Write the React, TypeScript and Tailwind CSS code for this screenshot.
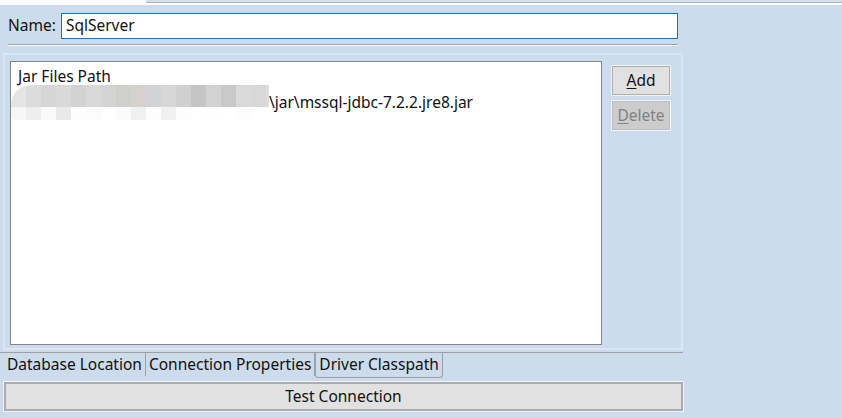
import React from "react";

const blurTop = ["#e4e4e4", "#dcdcdc", "#d6d6d6", "#d9d9d9", "#d2d2d2", "#d8d8d8", "#d4d4d4", "#cfd0cc", "#d6d1cf", "#d2d3d6", "#d7d7d7", "#d0d0d0", "#c6c5c5", "#d2d2d2", "#c9c9c9", "#dadada", "#d8d8d8", "#dddddd"];
const blurBottom = ["#f6f6f6", "#eeeeee", "#fafafa", "#e9e9e9", "#fdfdfd", "#fcfcfc", "#ffffff", "#fbfbfb", "#f0f0f0", "#fdfdfd", "#f1f1f1", "#fdfdfd", "#ffffff", "#fefefe", "#ffffff", "#fdfdfd", "#ffffff", "#ffffff"];

function Blur() {
  return (
    <div className="flex h-[35px] w-[258px] flex-col overflow-hidden rounded-tl-[20px] rounded-bl-[6px]">
      <div className="flex h-[22px]">
        {blurTop.map((c, i) => (
          <div key={i} className="h-full w-[15px] shrink-0" style={{ background: c }} />
        ))}
      </div>
      <div className="flex h-[13px]">
        {blurBottom.map((c, i) => (
          <div key={i} className="h-full w-[15px] shrink-0" style={{ background: c }} />
        ))}
      </div>
    </div>
  );
}

function Tab({ label, selected }: { label: string; selected?: boolean }) {
  if (selected) {
    return (
      <div className="flex h-[25px] items-center rounded-b-[3px] border-x border-b border-[#a0a0a0] bg-[#cddcec] px-[3px]">
        {label}
      </div>
    );
  }
  return <div className="flex h-[23px] items-center border-r border-[#a0a0a0] px-[3px]">{label}</div>;
}

export default function App() {
  return (
    <div
      className="flex h-[418px] w-[842px] flex-col overflow-hidden bg-[#cddcec] text-[15.5px] text-[#111]"
      style={{ fontFamily: '"Noto Sans", "Open Sans", sans-serif' }}
    >
      <div className="flex h-[5px] shrink-0">
        <div className="w-[146px] bg-white" />
        <div className="flex flex-1 flex-col">
          <div className="h-[3px] border-b border-[#a9b5c8] bg-[#d6deea]" />
          <div className="h-[2px] bg-white" />
        </div>
      </div>

      <div className="ml-[8px] mt-[8px] flex h-[26px] w-[670px] items-center gap-[5px]">
        <span className="leading-none">Name:</span>
        <div className="flex h-full flex-1 items-center border border-[#0078d7] bg-white px-[4px] leading-none">SqlServer</div>
      </div>
      <div className="ml-[8px] mt-[5px] w-[670px] border-t border-b border-t-[#a0a0a0] border-b-white" />

      <div className="ml-[3px] mt-[7px] flex h-[297px] w-[680px] gap-[10px] border-2 border-[#dbe6f2] pl-[5px] pr-[11px] pt-[6px] pb-[3px]">
        <div className="flex flex-1 flex-col border border-[#828790] bg-white">
          <div className="ml-[7px] mt-[4px] leading-[20px]">Jar Files Path</div>
          <div className="-mt-px flex items-center">
            <Blur />
            <span className="leading-none">\jar\mssql-jdbc-7.2.2.jre8.jar</span>
          </div>
        </div>
        <div className="flex w-[58px] flex-col gap-[6px] pt-[5px]">
          <div className="flex h-[29px] items-center justify-center border border-[#adadad] bg-[#e1e1e1] outline outline-1 outline-[#f0f4f8]">
            <span>
              <span className="underline underline-offset-2">A</span>dd
            </span>
          </div>
          <div className="flex h-[29px] items-center justify-center border border-[#bfbfbf] bg-[#cccccc] text-[#838383] outline outline-1 outline-[#f0f4f8]">
            <span>
              <span className="underline underline-offset-2">D</span>elete
            </span>
          </div>
        </div>
      </div>

      <div className="mt-[2px] w-[683px] border-t border-[#a0a0a0]" />
      <div className="flex items-start pl-[4px]">
        <Tab label="Database Location" />
        <Tab label="Connection Properties" />
        <Tab label="Driver Classpath" selected />
      </div>

      <div className="ml-[4px] mt-[4px] flex h-[29px] w-[679px] items-center justify-center border-2 border-[#adadad] bg-[#e1e1e1] outline outline-1 outline-[#f0f4f8]">
        Test Connection
      </div>
    </div>
  );
}
